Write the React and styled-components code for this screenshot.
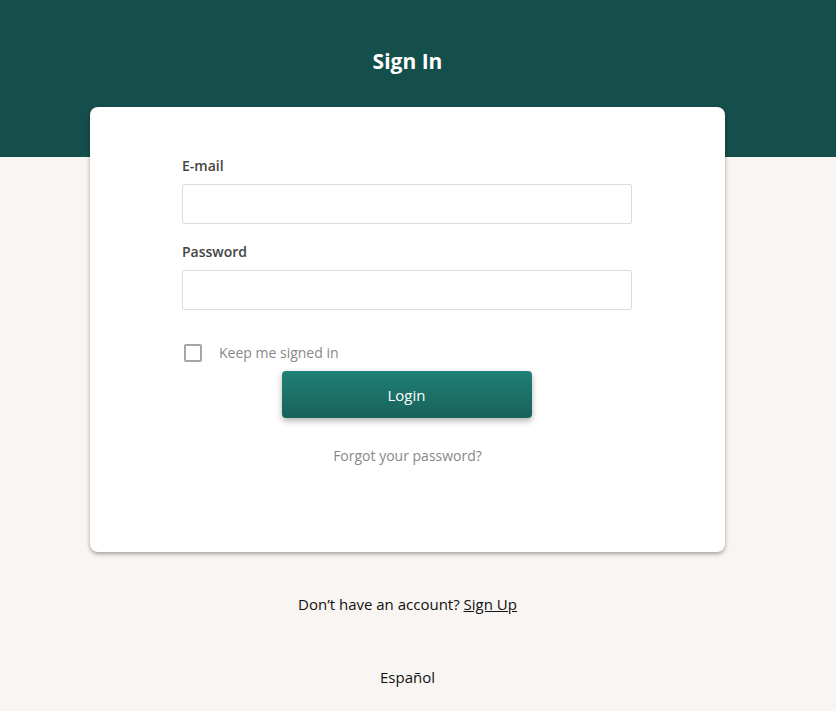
import React from 'react'
import styled, { createGlobalStyle } from 'styled-components'

const GlobalStyle = createGlobalStyle`
  body {
    margin: 0;
    background: #f8f5f2;
    font-family: "Open Sans", "Noto Sans", sans-serif;
  }
`

const Page = styled.div`
  width: 836px;
  min-height: 711px;
  background: #f8f5f2;
`

const Header = styled.header`
  height: 157px;
  background: #154f4b;
  box-sizing: border-box;
  padding-right: 21px;
  padding-top: 46px;
  text-align: center;
`

const Title = styled.h1`
  margin: 0;
  color: #ffffff;
  font-size: 21px;
  font-weight: 700;
  line-height: 30px;
`

const Main = styled.main`
  width: 815px;
  display: flex;
  flex-direction: column;
  align-items: center;
`

const Card = styled.div`
  width: 635px;
  height: 445px;
  margin-top: -50px;
  box-sizing: border-box;
  background: #ffffff;
  border-radius: 8px;
  box-shadow: 0 2px 4px rgba(0, 0, 0, 0.35);
  padding: 49px 92px 0;
  display: flex;
  flex-direction: column;
`

const Label = styled.label`
  display: block;
  color: #444;
  font-size: 14px;
  font-weight: 600;
  line-height: 20px;
  margin-top: ${p => p.$top || 0}px;
  margin-bottom: 8px;
`

const Input = styled.input`
  display: block;
  width: 450px;
  height: 40px;
  box-sizing: border-box;
  border: 1px solid #dcdcdc;
  border-radius: 2px;
  padding: 0 10px;
  font: inherit;
  outline: none;
`

const CheckRow = styled.div`
  display: flex;
  align-items: center;
  gap: 17px;
  margin-top: 33px;
  padding-left: 2px;
`

const Box = styled.span`
  width: 18px;
  height: 18px;
  box-sizing: border-box;
  border: 2px solid #a6a6a6;
  border-radius: 2px;
`

const CheckText = styled.span`
  color: #888;
  font-size: 14px;
  line-height: 20px;
`

const Button = styled.button`
  align-self: center;
  width: 250px;
  height: 47px;
  margin-top: 8px;
  margin-left: -2px;
  border: none;
  border-radius: 4px;
  background: linear-gradient(#208077, #17625b);
  box-shadow: 0 3px 6px rgba(0, 0, 0, 0.3);
  color: #fff;
  font-family: inherit;
  font-size: 15px;
`

const Forgot = styled.a`
  align-self: center;
  margin-top: 28px;
  color: #888;
  font-size: 14px;
  line-height: 20px;
`

const Footer = styled.p`
  margin: ${p => p.$top}px 0 0;
  color: #111;
  font-size: 15px;
  line-height: 22px;
  text-align: center;
`

const Link = styled.a`
  color: #111;
  text-decoration: underline;
`

export default function App() {
  return (
    <Page>
      <GlobalStyle />
      <Header>
        <Title>Sign In</Title>
      </Header>
      <Main>
        <Card>
          <Label>E-mail</Label>
          <Input type="text" />
          <Label $top={18}>Password</Label>
          <Input type="password" />
          <CheckRow>
            <Box />
            <CheckText>Keep me signed in</CheckText>
          </CheckRow>
          <Button>Login</Button>
          <Forgot>Forgot your password?</Forgot>
        </Card>
        <Footer $top={41}>
          Don’t have an account? <Link>Sign Up</Link>
        </Footer>
        <Footer $top={51}>Español</Footer>
      </Main>
    </Page>
  )
}
